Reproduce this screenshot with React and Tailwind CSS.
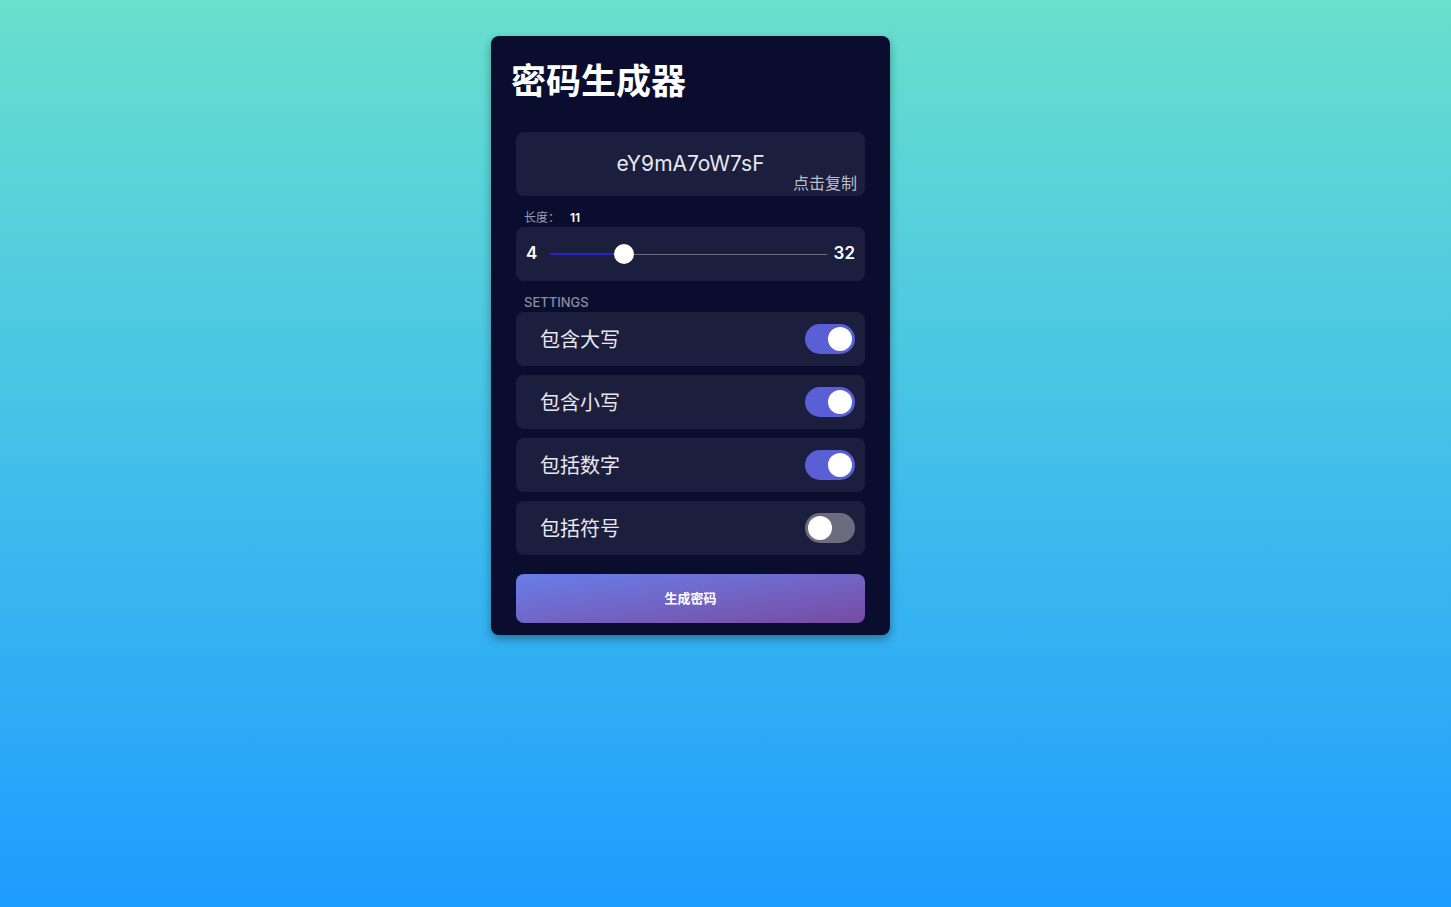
import { useState } from "react";

const font = { fontFamily: '"Inter", "Noto Sans CJK SC", sans-serif' };

const Toggle = ({ on, onClick }) => (
  <button
    onClick={onClick}
    className={`flex h-[30px] w-[50px] items-center rounded-full px-[3px] ${
      on ? "justify-end bg-[#5b5fd6]" : "justify-start bg-[#6b6c7e]"
    }`}
  >
    <span className="block h-[24px] w-[24px] rounded-full bg-white" />
  </button>
);

const App = () => {
  const [length, setLength] = useState(11);
  const [opts, setOpts] = useState([
    { label: "包含大写", on: true },
    { label: "包含小写", on: true },
    { label: "包括数字", on: true },
    { label: "包括符号", on: false },
  ]);

  const frac = (length - 4) / 28;
  // thumb centre stays inside the track, like a native range input
  const thumbLeft = `calc(10px + ${frac} * (100% - 20px))`;

  return (
    <div
      style={font}
      className="min-h-[907px] w-full bg-gradient-to-b from-[#69e0cd] to-[#1e9bff] pt-[36px]"
    >
      <div className="mx-auto flex w-[399px] flex-col rounded-lg bg-[#0b0d2e] px-[25px] pb-[12px] pt-[22px] shadow-[0_4px_10px_rgba(0,0,0,0.35)] translate-x-[-35px]">
        <h1 className="ml-[-5px] text-[35px] font-bold leading-[46px] text-white">
          密码生成器
        </h1>

        <div className="relative mt-[28px] flex h-[64px] items-center justify-center rounded-lg bg-[#1c1e3d]">
          <span className="text-[21px] text-[#e8e8f0]">eY9mA7oW7sF</span>
          <span className="absolute bottom-[1px] right-[8px] text-[16px] text-[#bdbecb]">
            点击复制
          </span>
        </div>

        <div className="mt-[13px] flex items-center gap-[10px] px-[8px] text-[12px] leading-[18px]">
          <span className="text-[#9a9bb0]">长度：</span>
          <span className="font-semibold text-white">{length}</span>
        </div>

        <div className="flex h-[54px] items-center rounded-lg bg-[#1c1e3d] px-[10px]">
          <span className="text-[17px] font-semibold text-white">4</span>
          <div className="relative ml-[13px] mr-[7px] flex h-[20px] flex-1 items-center">
            <div className="h-[1px] w-full bg-[#6b6c7e]" />
            <div
              className="absolute left-0 h-[2px] bg-[#2424c8]"
              style={{ width: thumbLeft }}
            />
            <div
              className="absolute h-[20px] w-[20px] -translate-x-1/2 rounded-full bg-white"
              style={{ left: thumbLeft }}
            />
            <input
              type="range"
              min={4}
              max={32}
              value={length}
              onChange={(e) => setLength(+e.target.value)}
              className="absolute inset-0 w-full cursor-pointer opacity-0"
            />
          </div>
          <span className="text-[17px] font-semibold text-white">32</span>
        </div>

        <div className="mt-[12px] px-[8px] text-[13px] font-medium leading-[18px] text-[#8b8ca0]">
          SETTINGS
        </div>

        <div className="mt-[1px] flex flex-col gap-[9px]">
          {opts.map((o, i) => (
            <div
              key={o.label}
              className="flex h-[54px] items-center justify-between rounded-lg bg-[#1c1e3d] pl-[24px] pr-[10px]"
            >
              <span className="pt-[2px] text-[20px] text-[#e8e8f0]">{o.label}</span>
              <Toggle
                on={o.on}
                onClick={() =>
                  setOpts(opts.map((x, j) => (j === i ? { ...x, on: !x.on } : x)))
                }
              />
            </div>
          ))}
        </div>

        <button className="mt-[19px] h-[49px] w-full rounded-lg bg-gradient-to-br from-[#667eea] to-[#764ba2] text-[13px] font-bold text-white">
          生成密码
        </button>
      </div>
    </div>
  );
};

export default App;
